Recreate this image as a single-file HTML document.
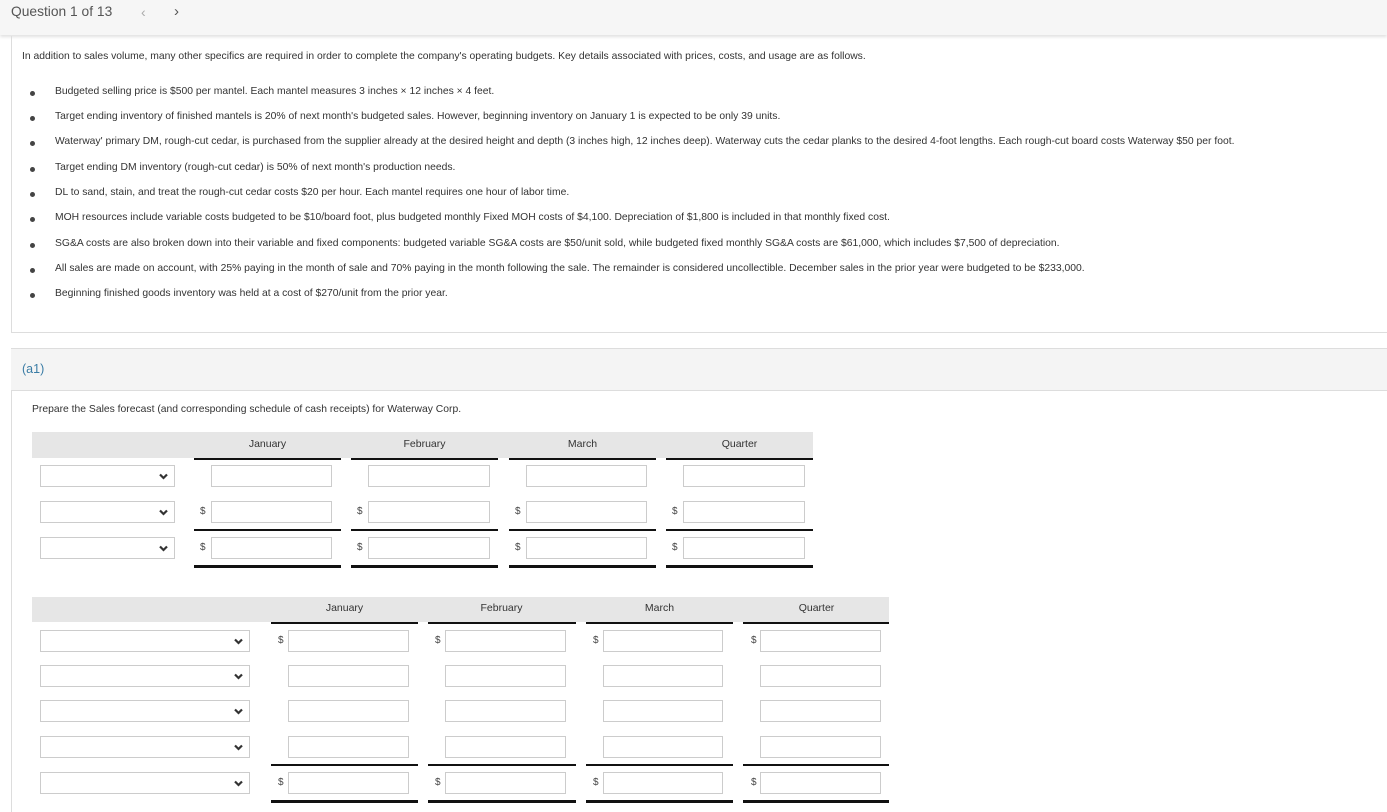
<!DOCTYPE html>
<html><head><meta charset="utf-8">
<style>
*{box-sizing:border-box;margin:0;padding:0}
body{width:1387px;height:812px;overflow:hidden;background:#fff;font-family:"Liberation Sans",sans-serif;color:#333;position:relative}
.a{position:absolute;white-space:nowrap}
.hdr{left:0;top:0;width:1387px;height:35px;background:#f6f6f6;box-shadow:0 2px 3px rgba(0,0,0,.12)}
.t{font-size:10.35px;color:#333}
.b{left:30px;width:5px;height:5px;border-radius:50%;background:#444}
.inp{position:absolute;height:22px;border:1px solid #ccc;background:#fff}
.sel{position:absolute;height:22px;border:1px solid #ccc;background:#fff}
.sel svg{position:absolute;right:6px;top:7px}
.ln{position:absolute;height:1.5px;background:#111}
.lnt{position:absolute;height:3px;background:#111}
.d{position:absolute;font-size:10px;color:#444}
.ch{position:absolute;font-size:10.5px;color:#333;text-align:center}
</style></head><body>
<div class="a hdr"></div>
<div class="a" style="left:11px;top:4px;font-size:13.8px;color:#555">Question 1 of 13</div>
<div class="a" style="left:141px;top:4px;font-size:14px;color:#aaa">&lsaquo;</div>
<div class="a" style="left:174px;top:3px;font-size:15px;color:#555">&rsaquo;</div>

<div class="a" style="left:11px;top:36px;width:1380px;height:297px;border:1px solid #ddd;border-top:none"></div>
<div class="a" style="left:11px;top:348px;width:1380px;height:464px;border-left:1px solid #ddd"></div>
<div class="a" style="left:11px;top:348px;width:1380px;height:43px;background:#f4f4f4;border-top:1px solid #ddd;border-bottom:1px solid #ddd"></div>
<div class="a" style="left:22px;top:362px;font-size:12.5px;color:#3a7ca5">(a1)</div>

<div class="a t" style="left:22px;top:51px">In addition to sales volume, many other specifics are required in order to complete the company's operating budgets. Key details associated with prices, costs, and usage are as follows.</div>

<div class="a b" style="top:91px"></div><div class="a t" style="left:55px;top:86px">Budgeted selling price is $500 per mantel. Each mantel measures 3 inches × 12 inches × 4 feet.</div>
<div class="a b" style="top:116px"></div><div class="a t" style="left:55px;top:111px">Target ending inventory of finished mantels is 20% of next month's budgeted sales. However, beginning inventory on January 1 is expected to be only 39 units.</div>
<div class="a b" style="top:141px"></div><div class="a t" style="left:55px;top:136px">Waterway' primary DM, rough-cut cedar, is purchased from the supplier already at the desired height and depth (3 inches high, 12 inches deep). Waterway cuts the cedar planks to the desired 4-foot lengths. Each rough-cut board costs Waterway $50 per foot.</div>
<div class="a b" style="top:167px"></div><div class="a t" style="left:55px;top:162px">Target ending DM inventory (rough-cut cedar) is 50% of next month's production needs.</div>
<div class="a b" style="top:192px"></div><div class="a t" style="left:55px;top:187px">DL to sand, stain, and treat the rough-cut cedar costs $20 per hour. Each mantel requires one hour of labor time.</div>
<div class="a b" style="top:217px"></div><div class="a t" style="left:55px;top:212px">MOH resources include variable costs budgeted to be $10/board foot, plus budgeted monthly Fixed MOH costs of $4,100. Depreciation of $1,800 is included in that monthly fixed cost.</div>
<div class="a b" style="top:243px"></div><div class="a t" style="left:55px;top:238px">SG&amp;A costs are also broken down into their variable and fixed components: budgeted variable SG&amp;A costs are $50/unit sold, while budgeted fixed monthly SG&amp;A costs are $61,000, which includes $7,500 of depreciation.</div>
<div class="a b" style="top:268px"></div><div class="a t" style="left:55px;top:263px">All sales are made on account, with 25% paying in the month of sale and 70% paying in the month following the sale. The remainder is considered uncollectible. December sales in the prior year were budgeted to be $233,000.</div>
<div class="a b" style="top:293px"></div><div class="a t" style="left:55px;top:288px">Beginning finished goods inventory was held at a cost of $270/unit from the prior year.</div>

<div class="a t" style="left:32px;top:404px">Prepare the Sales forecast (and corresponding schedule of cash receipts) for Waterway Corp.</div>

<div class="a" style="left:32px;top:432px;width:781px;height:26px;background:#e6e6e6"></div>
<div class="ch" style="left:194px;top:438px;width:147px">January</div>
<div class="ch" style="left:351px;top:438px;width:147px">February</div>
<div class="ch" style="left:509px;top:438px;width:147px">March</div>
<div class="ch" style="left:666px;top:438px;width:147px">Quarter</div>
<div id="t1"></div>

<div class="a" style="left:32px;top:597px;width:857px;height:25px;background:#e6e6e6"></div>
<div class="ch" style="left:271px;top:602px;width:147px">January</div>
<div class="ch" style="left:428px;top:602px;width:147px">February</div>
<div class="ch" style="left:586px;top:602px;width:147px">March</div>
<div class="ch" style="left:743px;top:602px;width:147px">Quarter</div>
<div id="t2"></div>

<script>
var chev='<svg width="9" height="7" viewBox="0 0 9 7"><path d="M1 1.5L4.5 5L8 1.5" fill="none" stroke="#333" stroke-width="2.2"/></svg>';
function build(id,selL,selW,cols,rows,dollars,lines,thick){
 var h='';
 rows.forEach(function(y,i){
  h+='<div class="sel" style="left:'+selL+'px;top:'+y+'px;width:'+selW+'px">'+chev+'</div>';
  cols.forEach(function(c){
   h+='<div class="inp" style="left:'+c.i+'px;top:'+y+'px;width:'+c.w+'px"></div>';
   if(dollars[i]) h+='<div class="d" style="left:'+c.d+'px;top:'+(y+5)+'px">$</div>';
  });
 });
 cols.forEach(function(c){
  lines.forEach(function(y){h+='<div class="ln" style="left:'+c.u+'px;top:'+y+'px;width:'+c.uw+'px"></div>';});
  h+='<div class="lnt" style="left:'+c.u+'px;top:'+thick+'px;width:'+c.uw+'px"></div>';
 });
 document.getElementById(id).innerHTML=h;
}
build('t1',40,135,[
 {u:194,uw:147,i:211,w:121,d:200},{u:351,uw:147,i:368,w:122,d:357},
 {u:509,uw:147,i:526,w:121,d:515},{u:666,uw:147,i:683,w:122,d:672}],
 [465,501,537],[false,true,true],[458,529],565);
build('t2',40,210,[
 {u:271,uw:147,i:288,w:121,d:278},{u:428,uw:148,i:445,w:121,d:435},
 {u:586,uw:147,i:603,w:120,d:593},{u:743,uw:146,i:760,w:121,d:751}],
 [630,665,700,736,772],[true,false,false,false,true],[622,764],800);
</script>
</body></html>
